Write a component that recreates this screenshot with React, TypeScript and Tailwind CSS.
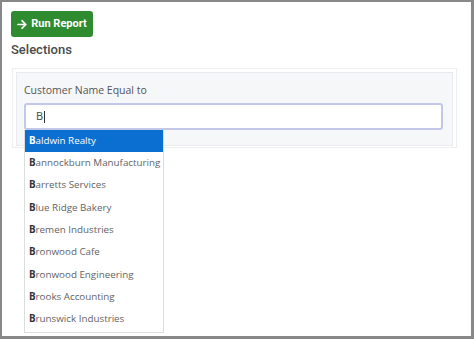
import React from "react";

const items = [
  "Baldwin Realty",
  "Bannockburn Manufacturing",
  "Barretts Services",
  "Blue Ridge Bakery",
  "Bremen Industries",
  "Bronwood Cafe",
  "Bronwood Engineering",
  "Brooks Accounting",
  "Brunswick Industries",
];

export default function App() {
  return (
    <div className="w-[474px] h-[339px] bg-[#888888] pt-[2px] pl-[2px] pr-[3px] pb-[3px]">
      <div className="w-full h-full bg-white pt-[9px] pl-[9px] pr-[12px] relative" style={{ fontFamily: "Roboto, 'Open Sans', sans-serif" }}>
        <button className="h-[26px] w-[82px] rounded-[3px] bg-[#2e8b2f] text-white text-[11px] font-bold flex items-center justify-center gap-[4px]">
          <svg width="10" height="11" viewBox="0 0 448 512" fill="white">
            <path d="M190.5 66.9l22.2-22.2c9.4-9.4 24.6-9.4 33.9 0L441 239c9.4 9.4 9.4 24.6 0 33.9L246.6 467.3c-9.4 9.4-24.6 9.4-33.9 0l-22.2-22.2c-9.5-9.5-9.3-25 .4-34.3L311.4 296H24c-13.3 0-24-10.7-24-24v-32c0-13.3 10.7-24 24-24h287.4L190.9 101.2c-9.8-9.3-10-24.8-.4-34.3z" />
          </svg>
          <span>Run Report</span>
        </button>
        <div className="mt-[5px] text-[13px] font-medium text-[#4a4a4a] leading-[16px]">Selections</div>
        <div className="mt-[10px] ml-[1px] w-[445px] border border-[#eeeeee] p-[3px] pb-[1px]">
          <div className="h-[74px] bg-[#f6f7f9] border border-[#e8eaee] pl-[7px] pr-[7px] pt-[10px]">
            <div className="text-[10.5px] text-[#555] leading-[14px]" style={{ fontFamily: "'Open Sans', sans-serif" }}>
              Customer Name Equal to
            </div>
            <div className="mt-[6px] h-[27px] w-[419px] bg-white border-2 border-[#c3c8ea] rounded-[3px] flex items-center pl-[10px] text-[11px] text-[#444]" style={{ fontFamily: "'Open Sans', sans-serif" }}>
              B<span className="inline-block w-[1px] h-[12px] bg-[#333] ml-[1px]"></span>
            </div>
          </div>
        </div>
        <div
          className="absolute left-[22px] top-[128px] w-[140px] bg-white border border-[#dddddd] border-t-0 pb-[1px]"
          style={{ fontFamily: "'Open Sans', sans-serif" }}
        >
          {items.map((it, i) => (
            <div
              key={it}
              className={
                "h-[22.3px] flex items-center pl-[4px] text-[9.8px] whitespace-nowrap " +
                (i === 0 ? "bg-[#0b6fd1] text-white" : "text-[#636363]")
              }
            >
              <span className={"font-bold " + (i === 0 ? "text-white" : "text-[#333]")}>B</span>
              {it.slice(1)}
            </div>
          ))}
        </div>
      </div>
    </div>
  );
}
